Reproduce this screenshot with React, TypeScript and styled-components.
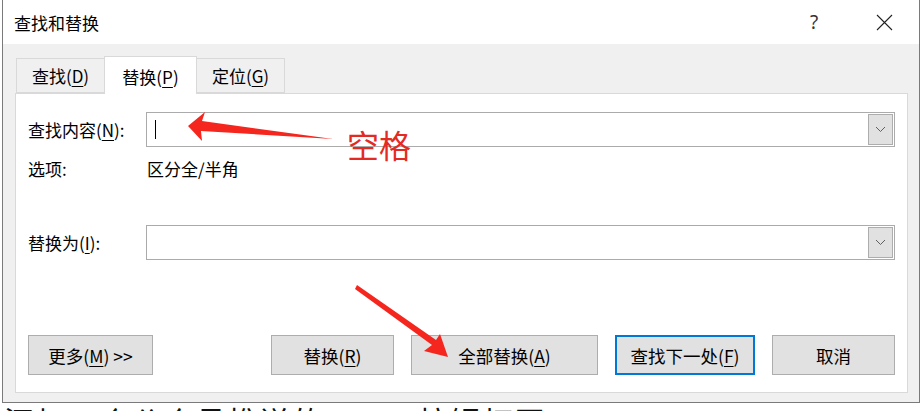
import React from 'react';
import styled, { createGlobalStyle } from 'styled-components';

const GlobalStyle = createGlobalStyle`
  html, body {
    margin: 0;
    padding: 0;
    background: #ffffff;
  }
  body {
    font-family: "Noto Sans CJK SC", "Noto Sans", sans-serif;
    color: #000;
  }
`;

const Page = styled.div`
  position: relative;
  width: 922px;
  height: 411px;
  overflow: hidden;
  background: #ffffff;
`;

const Dialog = styled.div`
  margin-left: 2px;
  width: 916px;
  height: 402px;
  border: 1px solid #7a7a7a;
  border-top: none;
  background: #f0f0f0;
  display: flex;
  flex-direction: column;
`;

const TitleBar = styled.div`
  height: 44px;
  background: #ffffff;
  display: flex;
  align-items: center;
  padding-left: 11px;
  font-size: 17px;
`;

const Title = styled.div`
  flex: 1;
`;

const TitleButton = styled.div`
  width: 70px;
  height: 44px;
  display: flex;
  align-items: center;
  justify-content: center;
  font-size: 19px;
  color: #333;
  font-family: "Noto Sans", sans-serif;
`;

const Body = styled.div`
  flex: 1;
  padding: 14px 11px 9px 12px;
  display: flex;
  flex-direction: column;
`;

const TabRow = styled.div`
  display: flex;
  height: 35px;
  padding-left: 1px;
`;

const Tab = styled.div<{ $active?: boolean; $first?: boolean; $width: number }>`
  position: relative;
  z-index: ${(p) => (p.$active ? 2 : 1)};
  display: flex;
  align-items: center;
  justify-content: center;
  width: ${(p) => p.$width}px;
  margin-top: ${(p) => (p.$active ? -2 : 0)}px;
  margin-bottom: ${(p) => (p.$active ? -1 : 0)}px;
  margin-left: ${(p) => (p.$active ? -1 : 0)}px;
  border: 1px solid #d9d9d9;
  border-bottom: ${(p) => (p.$active ? 'none' : '1px solid #d9d9d9')};
  border-left: ${(p) => (p.$active || p.$first ? '1px solid #d9d9d9' : 'none')};
  background: ${(p) => (p.$active ? '#ffffff' : '#f0f0f0')};
  font-size: 17px;
  padding-top: ${(p) => (p.$active ? 2 : 0)}px;
  box-sizing: border-box;
`;

const Key = styled.span`
  text-decoration: underline;
  text-underline-offset: 3px;
  text-decoration-thickness: 1px;
`;

const Panel = styled.div`
  position: relative;
  z-index: 1;
  flex: 1;
  background: #ffffff;
  border: 1px solid #d9d9d9;
  padding: 18px 12px 17px 12px;
  display: flex;
  flex-direction: column;
`;

const FieldRow = styled.div<{ $top?: number }>`
  display: flex;
  align-items: center;
  margin-top: ${(p) => p.$top ?? 0}px;
`;

const Label = styled.div`
  width: 118px;
  font-size: 17px;
  color: #000;
`;

const OptionText = styled.div`
  font-size: 17px;
  padding-left: 1px;
`;

const ComboBox = styled.div`
  flex: 1;
  height: 35px;
  box-sizing: border-box;
  border: 1px solid #ababab;
  display: flex;
  align-items: stretch;
  padding: 1px;
`;

const ComboInput = styled.div`
  flex: 1;
  display: flex;
  align-items: center;
  padding-left: 7px;
`;

const Caret = styled.div`
  width: 1px;
  height: 19px;
  background: #000;
`;

const DropButton = styled.div`
  width: 25px;
  box-sizing: border-box;
  border: 1px solid #adadad;
  background: #e1e1e1;
  display: flex;
  align-items: center;
  justify-content: center;
`;

const ButtonRow = styled.div`
  margin-top: auto;
  display: flex;
  align-items: center;
  gap: 17px;
`;

const Spacer = styled.div`
  flex: 1;
`;

const Button = styled.button<{ $width: number; $default?: boolean }>`
  width: ${(p) => p.$width}px;
  height: 40px;
  box-sizing: border-box;
  background: #e1e1e1;
  border: ${(p) => (p.$default ? '2px solid #0078d7' : '1px solid #adadad')};
  font-family: "Noto Sans CJK SC", "Noto Sans", sans-serif;
  font-size: 17.5px;
  color: #000;
  padding: 0;
  display: flex;
  align-items: center;
  justify-content: center;
`;

const DocLine = styled.div`
  margin-left: 4px;
  margin-top: 2px;
  height: 8px;
  overflow: hidden;
  font-size: 30px;
  line-height: 30px;
  white-space: nowrap;
  color: #111;
  letter-spacing: 2px;
`;

const Overlay = styled.svg`
  position: absolute;
  left: 0;
  top: 0;
  pointer-events: none;
  z-index: 5;
`;

const Note = styled.div`
  position: absolute;
  left: 347px;
  top: 121px;
  z-index: 6;
  font-size: 32px;
  color: #e32b24;
`;

const Chevron = () => (
  <svg width="11" height="7" viewBox="0 0 11 7">
    <path d="M1 1 L5.5 5.5 L10 1" fill="none" stroke="#606060" strokeWidth="1" />
  </svg>
);

const CloseIcon = () => (
  <svg width="17" height="17" viewBox="0 0 17 17">
    <path d="M1 1 L16 16 M16 1 L1 16" stroke="#222" strokeWidth="1.1" />
  </svg>
);

const App = () => {
  return (
    <Page>
      <GlobalStyle />
      <Dialog>
        <TitleBar>
          <Title>查找和替换</Title>
          <TitleButton>?</TitleButton>
          <TitleButton>
            <CloseIcon />
          </TitleButton>
        </TitleBar>
        <Body>
          <TabRow>
            <Tab $width={89} $first>
              查找(<Key>D</Key>)
            </Tab>
            <Tab $width={93} $active>
              替换(<Key>P</Key>)
            </Tab>
            <Tab $width={88}>
              定位(<Key>G</Key>)
            </Tab>
          </TabRow>
          <Panel>
            <FieldRow>
              <Label>
                查找内容(<Key>N</Key>):
              </Label>
              <ComboBox>
                <ComboInput>
                  <Caret />
                </ComboInput>
                <DropButton>
                  <Chevron />
                </DropButton>
              </ComboBox>
            </FieldRow>
            <FieldRow $top={9}>
              <Label>选项:</Label>
              <OptionText>区分全/半角</OptionText>
            </FieldRow>
            <FieldRow $top={44}>
              <Label>
                替换为(<Key>I</Key>):
              </Label>
              <ComboBox>
                <ComboInput />
                <DropButton>
                  <Chevron />
                </DropButton>
              </ComboBox>
            </FieldRow>
            <ButtonRow>
              <Button $width={125}>
                更多(<Key>M</Key>) &gt;&gt;
              </Button>
              <Spacer />
              <Button $width={123}>
                替换(<Key>R</Key>)
              </Button>
              <Button $width={187}>
                全部替换(<Key>A</Key>)
              </Button>
              <Button $width={140} $default>
                查找下一处(<Key>F</Key>)
              </Button>
              <Button $width={123}>取消</Button>
            </ButtonRow>
          </Panel>
        </Body>
      </Dialog>
      <DocLine>添加一个公众号推送的ABCD 按钮打开。</DocLine>

      <Overlay width="922" height="411" viewBox="0 0 922 411">
        <polygon
          points="188,126 205,112 202,121 333,139 201,131 202,141"
          fill="#f5261d"
        />
        <polygon
          points="357,285 436,340 440,334 448,357 424,351 432,345 355,289"
          fill="#f5261d"
        />
      </Overlay>
      <Note>空格</Note>
    </Page>
  );
};

export default App;
